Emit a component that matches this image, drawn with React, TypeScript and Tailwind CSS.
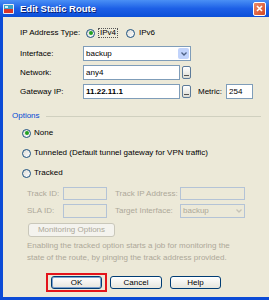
import { ReactNode } from 'react'

const FONT = { fontFamily: '"Liberation Sans", Arial, sans-serif' }

function Radio({ checked, disabled }: { checked?: boolean; disabled?: boolean }) {
    return (
        <span
            className={`flex h-[9px] w-[9px] shrink-0 items-center justify-center rounded-full border ${
                disabled ? 'border-[#c9c7ba]' : 'border-[#1c5180]'
            } bg-gradient-to-br from-[#dcdbd5] to-white`}
        >
            {checked && <span className="h-[4px] w-[4px] rounded-full bg-[#21a121]" />}
        </span>
    )
}

function Field({ children, className, disabled }: { children?: ReactNode; className: string; disabled?: boolean }) {
    return (
        <div
            className={`flex items-center border px-[2px] ${
                disabled ? 'border-[#b4c3d6] bg-[#ece9d8] text-[#aca899]' : 'border-[#7f9db9] bg-white text-black'
            } ${className}`}
        >
            {children}
        </div>
    )
}

function Chevron({ color }: { color: string }) {
    return (
        <svg width="6" height="4" viewBox="0 0 6 4">
            <path d="M0.5 0.5 L3 3 L5.5 0.5" fill="none" stroke={color} strokeWidth="1.3" />
        </svg>
    )
}

function DotsButton() {
    return (
        <div className="flex h-[13px] w-[9px] items-end justify-center rounded-[2px] border border-[#5c7a99] bg-gradient-to-b from-white to-[#dcdcd4] pb-[2px]">
            <span className="h-px w-[5px] bg-[#555]" />
        </div>
    )
}

function XpButton({ label, focused, disabled, className }: { label: string; focused?: boolean; disabled?: boolean; className: string }) {
    return (
        <div
            className={`flex items-center justify-center rounded-[3px] border ${
                disabled
                    ? 'border-[#c9c7ba] bg-[#f4f3ee] text-[#aca899]'
                    : 'border-[#003c74] bg-gradient-to-b from-white to-[#e6e5dd] text-black'
            } ${focused ? 'shadow-[inset_0_0_0_1px_#7da2ce]' : ''} ${className}`}
        >
            {label}
        </div>
    )
}

export default function App() {
    return (
        <div className="flex h-[300px] w-[269px] flex-col overflow-hidden text-[8px] leading-none" style={FONT}>
            {/* title bar */}
            <div className="flex h-[17px] shrink-0 items-center bg-gradient-to-b from-[#4a8ff5] via-[#1d5fe6] to-[#0a4fd8] pl-[3px] pr-[3px]">
                <svg width="11" height="10" viewBox="0 0 11 10" className="shrink-0">
                    <rect x="0" y="0" width="11" height="10" rx="1" fill="#e9eef7" />
                    <rect x="1" y="1" width="9" height="4" fill="#3aa3c9" />
                    <rect x="1" y="5" width="9" height="4" fill="#d9362b" />
                    <rect x="2" y="2" width="3" height="2" fill="#d8f0f7" />
                </svg>
                <span className="ml-[6px] text-[9.5px] font-bold text-white" style={{ textShadow: '1px 1px 0 #0a1f6e' }}>
                    Edit Static Route
                </span>
                <div className="ml-auto flex h-[14px] w-[13px] items-center justify-center rounded-[2px] border border-white bg-gradient-to-br from-[#ec8a6a] to-[#d2441c]">
                    <svg width="7" height="7" viewBox="0 0 7 7">
                        <path d="M1 1 L6 6 M6 1 L1 6" stroke="white" strokeWidth="1.6" />
                    </svg>
                </div>
            </div>

            <div className="flex min-h-0 flex-1">
                <div className="w-[3px] shrink-0 bg-[#0b4bd6]" />
                <div className="flex flex-1 flex-col bg-[#ece9d8] text-black">
                    {/* IP address type */}
                    <div className="mt-[9px] flex h-[14px] items-center pl-[17px]">
                        <span className="w-[66px]">IP Address Type:</span>
                        <Radio checked />
                        <span className="ml-[3px] border border-dotted border-[#555] px-px">IPv4</span>
                        <span className="ml-[8px]">
                            <Radio />
                        </span>
                        <span className="ml-[4px]">IPv6</span>
                    </div>

                    {/* Interface */}
                    <div className="mt-[6px] flex h-[15px] items-center pl-[17px]">
                        <span className="w-[63px]">Interface:</span>
                        <Field className="h-[15px] w-[108px] justify-between pr-[1px]">
                            <span>backup</span>
                            <span className="flex h-[11px] w-[11px] items-center justify-center rounded-[2px] bg-[#c1d3fb]">
                                <Chevron color="#4d6185" />
                            </span>
                        </Field>
                    </div>

                    {/* Network */}
                    <div className="mt-[4px] flex h-[15px] items-center pl-[17px]">
                        <span className="w-[63px]">Network:</span>
                        <Field className="h-[15px] w-[97px]">any4</Field>
                        <span className="ml-[2px]">
                            <DotsButton />
                        </span>
                    </div>

                    {/* Gateway */}
                    <div className="mt-[4px] flex h-[15px] items-center pl-[17px]">
                        <span className="w-[63px]">Gateway IP:</span>
                        <Field className="h-[15px] w-[97px] font-bold">11.22.11.1</Field>
                        <span className="ml-[2px]">
                            <DotsButton />
                        </span>
                        <span className="ml-[7px] w-[28px]">Metric:</span>
                        <Field className="h-[15px] w-[27px]">254</Field>
                    </div>

                    {/* Options */}
                    <div className="mt-[12px] flex h-[10px] items-center pl-[9px] pr-[8px]">
                        <span className="text-[#0046d5]">Options</span>
                        <span className="ml-[6px] h-px flex-1 bg-[#d0d0bf]" />
                    </div>

                    <div className="mt-[5px] flex h-[14px] items-center pl-[19px]">
                        <Radio checked />
                        <span className="ml-[3px]">None</span>
                    </div>
                    <div className="mt-[6px] flex h-[14px] items-center pl-[19px]">
                        <Radio />
                        <span className="ml-[3px]">Tunneled (Default tunnel gateway for VPN traffic)</span>
                    </div>
                    <div className="mt-[6px] flex h-[14px] items-center pl-[19px]">
                        <Radio />
                        <span className="ml-[3px]">Tracked</span>
                    </div>

                    {/* Track fields */}
                    <div className="mt-[7px] flex h-[13px] items-center pl-[24px] text-[#aca899]">
                        <span className="w-[36px]">Track ID:</span>
                        <Field disabled className="h-[13px] w-[44px]" />
                        <span className="ml-[8px] w-[65px]">Track IP Address:</span>
                        <Field disabled className="h-[13px] w-[65px]" />
                    </div>
                    <div className="mt-[4px] flex h-[14px] items-center pl-[24px] text-[#aca899]">
                        <span className="w-[36px]">SLA ID:</span>
                        <Field disabled className="h-[14px] w-[44px]" />
                        <span className="ml-[8px] w-[65px]">Target Interface:</span>
                        <Field disabled className="h-[14px] w-[65px] justify-between pr-[2px]">
                            <span>backup</span>
                            <Chevron color="#c6c3b8" />
                        </Field>
                    </div>

                    <div className="mt-[5px] flex pl-[25px]">
                        <XpButton disabled label="Monitoring Options" className="h-[14px] w-[87px]" />
                    </div>

                    <p className="mt-[3px] pl-[24px] leading-[12px] text-[#aca899]">
                        Enabling the tracked option starts a job for monitoring the
                        <br />
                        state of the route, by pinging the track address provided.
                    </p>

                    {/* buttons */}
                    <div className="mt-[9px] flex h-[19px] items-center pl-[43px]">
                        <div className="flex h-[19px] w-[61px] items-center justify-center border-2 border-[#e3141b]">
                            <XpButton focused label="OK" className="h-[13px] w-[51px]" />
                        </div>
                        <XpButton label="Cancel" className="ml-[3px] h-[13px] w-[52px]" />
                        <XpButton label="Help" className="ml-[8px] h-[13px] w-[51px]" />
                    </div>

                    <div className="flex-1" />
                </div>
            </div>
            <div className="h-[3px] shrink-0 bg-[#0b4bd6]" />
        </div>
    )
}
